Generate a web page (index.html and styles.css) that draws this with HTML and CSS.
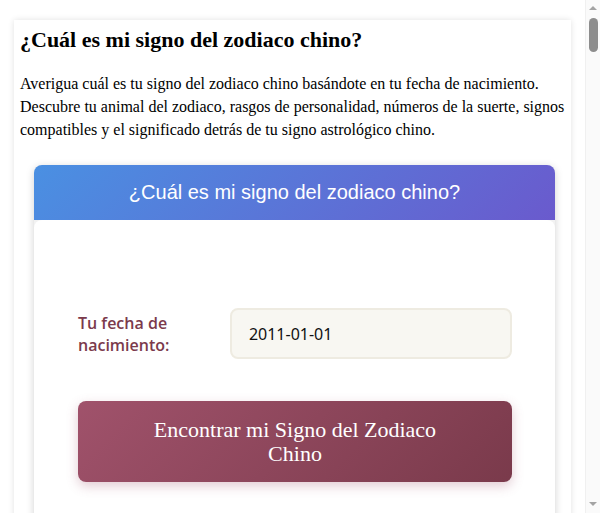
FILE: index.html
```html
<!DOCTYPE html>
<html lang="es">
<head>
<meta charset="utf-8">
<title>¿Cuál es mi signo del zodiaco chino?</title>
<link rel="stylesheet" href="styles.css">
</head>
<body>
<div class="page">
  <article class="card">
    <h2 class="title">¿Cuál es mi signo del zodiaco chino?</h2>
    <p class="intro">Averigua cuál es tu signo del zodiaco chino basándote en tu fecha de nacimiento. Descubre tu animal del zodiaco, rasgos de personalidad, números de la suerte, signos compatibles y el significado detrás de tu signo astrológico chino.</p>
    <section class="widget">
      <header class="widget-head">¿Cuál es mi signo del zodiaco chino?</header>
      <div class="widget-body">
        <form class="form">
          <div class="row">
            <label class="label" for="birth">Tu fecha de nacimiento:</label>
            <div class="field" id="birth">2011-01-01</div>
          </div>
          <button type="button" class="btn">Encontrar mi Signo del Zodiaco Chino</button>
        </form>
        <div class="result"></div>
      </div>
    </section>
  </article>
</div>
<div class="scrollbar" aria-hidden="true">
  <span class="arrow arrow-up"></span>
  <span class="thumb"></span>
  <span class="arrow arrow-down"></span>
</div>
</body>
</html>
```

FILE: styles.css
```css
html, body {
  margin: 0;
  padding: 0;
  background: #ffffff;
}

.page {
  padding: 20px 29px 40px 14px;
}

.card {
  background: #ffffff;
  box-shadow: 0 0 6px rgba(0, 0, 0, 0.12);
  padding: 6px 6px 30px 6px;
  font-family: "Liberation Serif", "Times New Roman", serif;
  color: #000;
}

.title {
  font-size: 22px;
  font-weight: bold;
  line-height: 28px;
  margin: 0 0 18px 0;
}

.intro {
  font-size: 16px;
  line-height: 23px;
  margin: 0 0 24px 0;
}

.widget {
  margin: 0 10px 0 14px;
  border-radius: 8px;
  box-shadow: 0 2px 8px rgba(0, 0, 0, 0.18);
  background: #f2f2f2;
}

.widget-head {
  background: linear-gradient(135deg, #4a90e2, #6a5acd);
  color: #ffffff;
  font-family: "Liberation Sans", Arial, sans-serif;
  font-size: 20px;
  line-height: 55px;
  height: 55px;
  text-align: center;
  border-radius: 8px 8px 0 0;
}

.widget-body {
  background: #ffffff;
  border-radius: 8px 8px 0 0;
  padding: 88px 43px 40px 44px;
}

.form {
  display: flex;
  flex-direction: column;
  gap: 42px;
}

.row {
  display: flex;
  align-items: center;
}

.label {
  flex: 0 0 35%;
  font-family: "Open Sans", "Noto Sans", sans-serif;
  font-weight: 600;
  font-size: 16px;
  line-height: 22px;
  color: #7b3a4c;
  padding-right: 20px;
  box-sizing: border-box;
}

.field {
  flex: 1;
  height: 51px;
  box-sizing: border-box;
  background: #f8f7f2;
  border: 2px solid #eeebe1;
  border-radius: 8px;
  padding: 0 17px;
  display: flex;
  align-items: center;
  font-family: "Noto Sans", "Open Sans", sans-serif;
  font-size: 16px;
  color: #111;
}

.btn {
  border: none;
  border-radius: 8px;
  background: linear-gradient(135deg, #a0526b, #7a3a4b);
  color: #ffffff;
  font-family: "Liberation Serif", "Times New Roman", serif;
  font-size: 22px;
  line-height: 24px;
  padding: 9px 70px 8px;
  height: 81px;
  box-shadow: 0 4px 12px rgba(160, 82, 107, 0.3);
  cursor: pointer;
}

.result {
  height: 300px;
}

.scrollbar {
  position: fixed;
  top: 0;
  right: 0;
  width: 15px;
  height: 100%;
  background: #fafafa;
  border-left: 1px solid #f0f0f0;
  box-sizing: border-box;
}

.thumb {
  position: absolute;
  top: 18px;
  left: 3px;
  width: 9px;
  height: 34px;
  border-radius: 5px;
  background: #8d8d8d;
}

.arrow {
  position: absolute;
  left: 3px;
  width: 0;
  height: 0;
  border-left: 4px solid transparent;
  border-right: 4px solid transparent;
}

.arrow-up {
  top: 6px;
  border-bottom: 4px solid #a3a3a3;
}

.arrow-down {
  bottom: 7px;
  border-top: 4px solid #a3a3a3;
}
```
